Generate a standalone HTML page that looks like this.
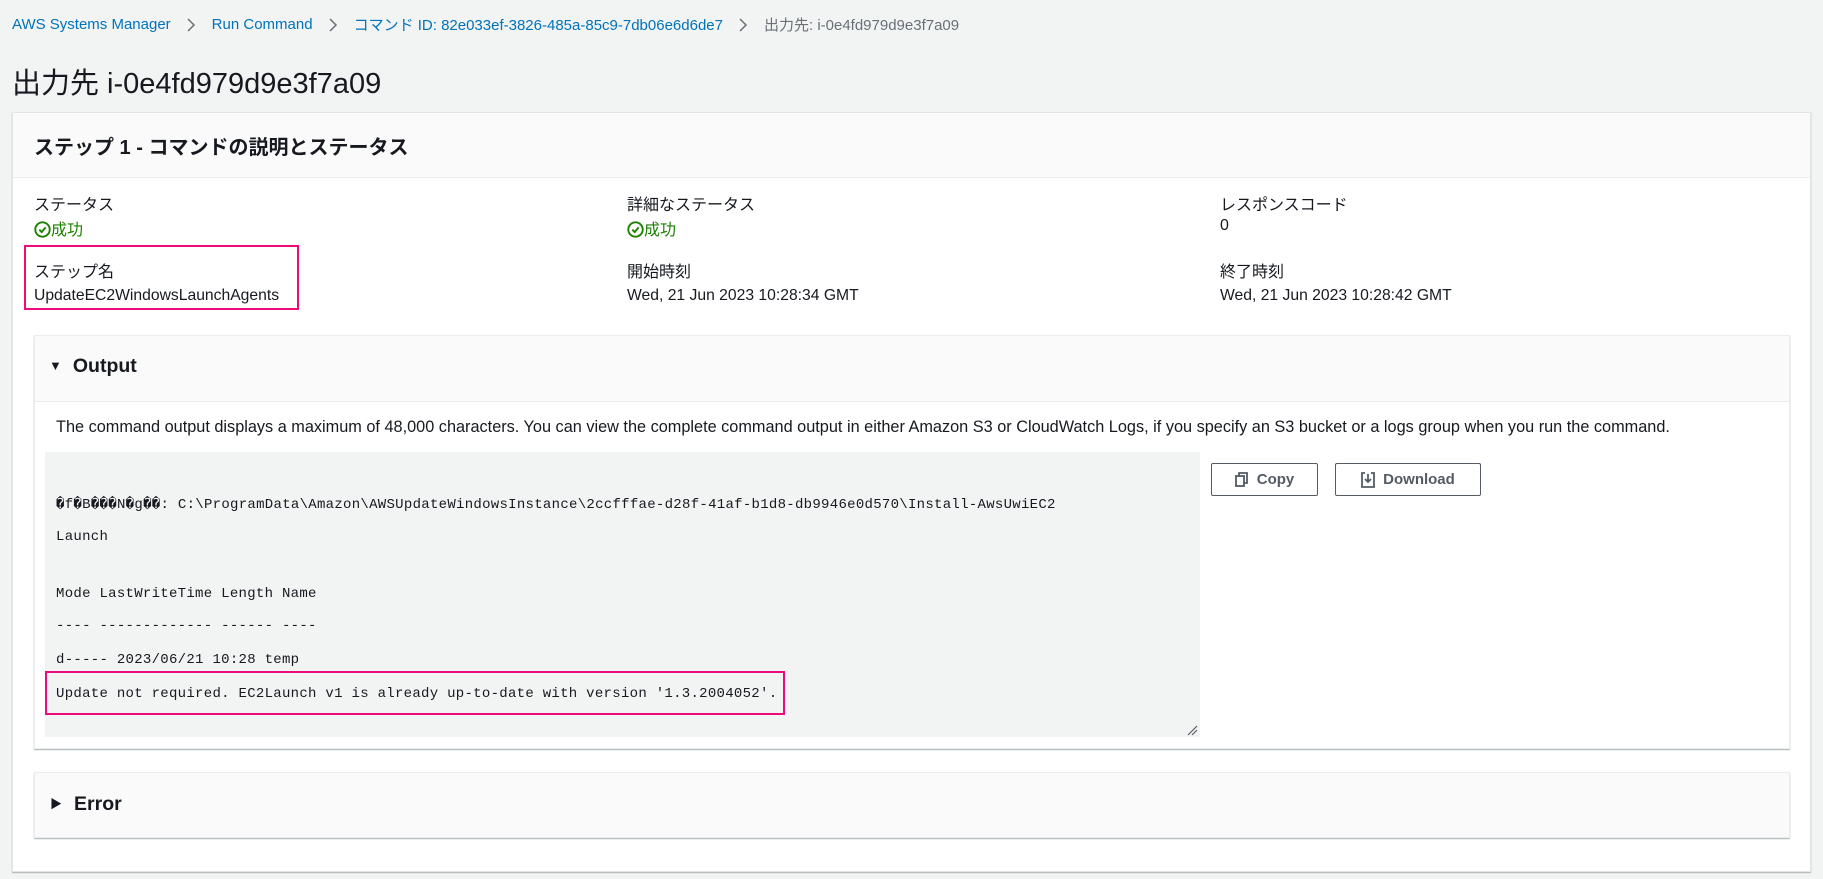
<!DOCTYPE html>
<html><head><meta charset="utf-8"><style>
*{box-sizing:border-box;margin:0;padding:0}
body{width:1823px;height:879px;background:#f2f3f3;font-family:"Liberation Sans","Noto Sans CJK JP",sans-serif;color:#16191f;position:relative;overflow:hidden;font-size:15px}
.a{position:absolute;white-space:nowrap}
.bc{top:14px;left:12px;font-size:15px;color:#0073bb;display:flex;align-items:center}
.bc svg{margin:0 16px}
.bc .g{color:#687078}
h1{position:absolute;left:12px;top:60px;font-size:29px;font-weight:400}
.panel{position:absolute;left:12px;top:112px;width:1799px;height:760px;background:#fff;border:1px solid #e0e4e4;box-shadow:0 1px 1px rgba(0,28,36,.3)}
.ph{position:absolute;left:0;top:0;width:100%;height:65px;background:#fafafa;border-bottom:1px solid #eaeded}
.lbl{font-size:16px;color:#16191f}
.v{font-size:15.7px}
.ok{color:#1d8102;font-size:16px}
.pink{position:absolute;border:2px solid #ec0b78}
.sub{position:absolute;left:34px;width:1756px;background:#fff;border:1px solid #eaeded;box-shadow:0 1px 1px rgba(0,28,36,.35)}
.subh{height:66px;background:#fafafa;border-bottom:1px solid #eaeded;position:relative}
.code{position:absolute;left:45px;top:452px;width:1155px;height:285px;background:#f2f3f3}
.mono{font-family:"Liberation Mono",monospace;font-size:14px;letter-spacing:0.29px;color:#16191f}
.btn{position:absolute;top:463px;height:33px;border:1px solid #545b64;border-radius:2px;background:#fff;font-weight:700;font-size:15px;color:#545b64;display:flex;align-items:center;justify-content:center;gap:8px}
</style></head><body>
<div class="a bc">AWS Systems Manager<svg width="9" height="14"><path d="M1 1l6 6-6 6" fill="none" stroke="#687078" stroke-width="1.5"/></svg>Run Command<svg width="9" height="14"><path d="M1 1l6 6-6 6" fill="none" stroke="#687078" stroke-width="1.5"/></svg>コマンド ID: 82e033ef-3826-485a-85c9-7db06e6d6de7<svg width="9" height="14"><path d="M1 1l6 6-6 6" fill="none" stroke="#687078" stroke-width="1.5"/></svg><span class="g">出力先: i-0e4fd979d9e3f7a09</span></div>
<h1>出力先 i-0e4fd979d9e3f7a09</h1>
<div class="panel"><div class="ph"></div></div>
<div class="a" style="left:34px;top:131px;font-size:20px;font-weight:700">ステップ 1 - コマンドの説明とステータス</div>

<div class="a lbl" style="left:34px;top:191px">ステータス</div>
<div class="a ok" style="left:34px;top:216px"><svg width="17" height="17" viewBox="0 0 16 16" style="vertical-align:-3px"><circle cx="8" cy="8" r="6.8" fill="none" stroke="#1d8102" stroke-width="1.8"/><path d="M5 8.2l2.2 2.2L11 6" fill="none" stroke="#1d8102" stroke-width="1.8"/></svg>成功</div>
<div class="a lbl" style="left:627px;top:191px">詳細なステータス</div>
<div class="a ok" style="left:627px;top:216px"><svg width="17" height="17" viewBox="0 0 16 16" style="vertical-align:-3px"><circle cx="8" cy="8" r="6.8" fill="none" stroke="#1d8102" stroke-width="1.8"/><path d="M5 8.2l2.2 2.2L11 6" fill="none" stroke="#1d8102" stroke-width="1.8"/></svg>成功</div>
<div class="a lbl" style="left:1220px;top:191px">レスポンスコード</div>
<div class="a lbl" style="left:1220px;top:217px">0</div>

<div class="a lbl" style="left:34px;top:258px">ステップ名</div>
<div class="a v" style="left:34px;top:287px">UpdateEC2WindowsLaunchAgents</div>
<div class="pink" style="left:24px;top:245px;width:275px;height:65px"></div>
<div class="a lbl" style="left:627px;top:258px">開始時刻</div>
<div class="a v" style="left:627px;top:287px">Wed, 21 Jun 2023 10:28:34 GMT</div>
<div class="a lbl" style="left:1220px;top:258px">終了時刻</div>
<div class="a v" style="left:1220px;top:287px">Wed, 21 Jun 2023 10:28:42 GMT</div>

<div class="sub" style="top:335px;height:414px"><div class="subh"></div></div>
<div class="a" style="left:49px;top:355px;font-size:19.5px;font-weight:700"><span style="font-size:13px;margin-right:11px;vertical-align:2px">▼</span>Output</div>
<div class="a" style="left:56px;top:418px;font-size:16.3px">The command output displays a maximum of 48,000 characters. You can view the complete command output in either Amazon S3 or CloudWatch Logs, if you specify an S3 bucket or a logs group when you run the command.</div>
<div class="code"></div>
<div class="a mono" style="left:56px;top:496px">�f�B���N�g��: C:\ProgramData\Amazon\AWSUpdateWindowsInstance\2ccfffae-d28f-41af-b1d8-db9946e0d570\Install-AwsUwiEC2</div>
<div class="a mono" style="left:56px;top:529px">Launch</div>
<div class="a mono" style="left:56px;top:586px">Mode LastWriteTime Length Name</div>
<div class="a mono" style="left:56px;top:618px">---- ------------- ------ ----</div>
<div class="a mono" style="left:56px;top:652px">d----- 2023/06/21 10:28 temp</div>
<div class="a mono" style="left:56px;top:686px">Update not required. EC2Launch v1 is already up-to-date with version '1.3.2004052'.</div>
<div class="pink" style="left:45px;top:671px;width:740px;height:44px"></div>
<svg class="a" style="left:1186px;top:724px" width="12" height="12"><path d="M2 11L11 2M6 11L11 6" stroke="#545b64" stroke-width="1.2"/></svg>

<div class="btn" style="left:1211px;width:107px"><svg width="14" height="15" viewBox="0 0 14 15"><rect x="1" y="4" width="8" height="10" fill="none" stroke="#545b64" stroke-width="1.8"/><path d="M4 4V1h8v10H9" fill="none" stroke="#545b64" stroke-width="1.8"/></svg>Copy</div>
<div class="btn" style="left:1335px;width:146px"><svg width="14" height="16" viewBox="0 0 14 16"><path d="M4 1H1v14h12V1h-3M7 2v8M4 7l3 3 3-3" fill="none" stroke="#545b64" stroke-width="1.8"/></svg>Download</div>

<div class="sub" style="top:772px;height:66px"><div class="subh" style="height:64px;border:0"></div></div>
<div class="a" style="left:50px;top:793px;font-size:19.5px;font-weight:700"><span style="font-size:12px;margin-right:12px;vertical-align:2px">▶</span>Error</div>
</body></html>
